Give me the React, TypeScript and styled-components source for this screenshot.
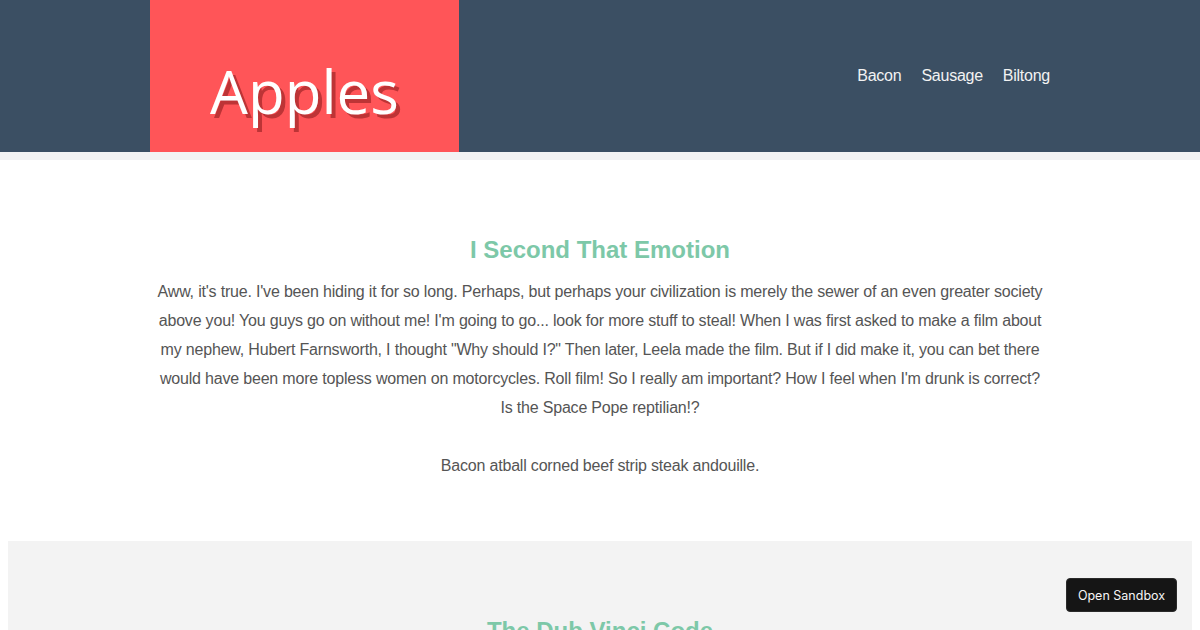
import React from 'react';
import styled, { createGlobalStyle } from 'styled-components';

const GlobalStyle = createGlobalStyle`
  html, body {
    margin: 0;
    padding: 0;
    background: #ffffff;
    font-family: 'Liberation Sans', Arial, sans-serif;
  }
  * {
    box-sizing: border-box;
  }
`;

const Header = styled.header`
  background: #3b4f63;
  border-bottom: 8px solid #f3f3f3;
`;

const HeaderInner = styled.div`
  width: 900px;
  height: 152px;
  margin: 0 auto;
  display: flex;
  align-items: stretch;
  justify-content: space-between;
`;

const Logo = styled.div`
  width: 309px;
  background: #ff5558;
  display: flex;
  align-items: flex-end;
  justify-content: center;
  padding-bottom: 31px;
  font-family: 'Open Sans', 'Noto Sans', sans-serif;
  font-size: 60px;
  line-height: 1;
  color: #ffffff;
  text-shadow: 4px 4px 0 #bd3436;
`;

const Nav = styled.nav`
  display: flex;
  align-items: center;
  gap: 20px;
  padding-bottom: 1px;
`;

const NavLink = styled.a`
  color: #f2f2f2;
  font-size: 16px;
  letter-spacing: -0.25px;
  text-decoration: none;
`;

const Section = styled.section<{ $grey?: boolean }>`
  background: ${({ $grey }) => ($grey ? '#f3f3f3' : '#ffffff')};
  margin: ${({ $grey }) => ($grey ? '0 8px' : '0')};
  padding: 76px 0 61px;
`;

const Content = styled.div`
  width: 900px;
  margin: 0 auto;
  text-align: center;
`;

const Title = styled.h2`
  margin: 0 0 13px;
  font-size: 24px;
  line-height: 28px;
  font-weight: bold;
  color: #7dc8a8;
`;

const Text = styled.p`
  margin: 0 0 29px;
  padding: 0 5px;
  font-size: 16px;
  line-height: 29px;
  letter-spacing: -0.19px;
  color: #555555;
  &:last-child {
    margin-bottom: 0;
  }
`;

const SandboxButton = styled.a`
  position: fixed;
  right: 23px;
  bottom: 18px;
  width: 111px;
  height: 34px;
  display: flex;
  align-items: center;
  justify-content: center;
  background: #151515;
  border: 1px solid #2a2a2a;
  border-radius: 4px;
  color: #f5f5f5;
  font-family: Inter, 'Liberation Sans', sans-serif;
  font-size: 12.5px;
  text-decoration: none;
`;

export default function App() {
  return (
    <>
      <GlobalStyle />
      <Header>
        <HeaderInner>
          <Logo>Apples</Logo>
          <Nav>
            <NavLink href="#">Bacon</NavLink>
            <NavLink href="#">Sausage</NavLink>
            <NavLink href="#">Biltong</NavLink>
          </Nav>
        </HeaderInner>
      </Header>
      <Section>
        <Content>
          <Title>I Second That Emotion</Title>
          <Text>
            Aww, it's true. I've been hiding it for so long. Perhaps, but perhaps your civilization is merely
            the sewer of an even greater society above you! You guys go on without me! I'm going to go... look
            for more stuff to steal! When I was first asked to make a film about my nephew, Hubert Farnsworth,
            I thought "Why should I?" Then later, Leela made the film. But if I did make it, you can bet there
            would have been more topless women on motorcycles. Roll film! So I really am important? How I feel
            when I'm drunk is correct? Is the Space Pope reptilian!?
          </Text>
          <Text>Bacon atball corned beef strip steak andouille.</Text>
        </Content>
      </Section>
      <Section $grey>
        <Content>
          <Title>The Dub Vinci Code</Title>
          <Text>
            Meatball corned beef strip steak andouille. Pork belly tenderloin ribeye, bresaola short loin
            picanha pastrami biltong.
          </Text>
        </Content>
      </Section>
      <SandboxButton href="#">Open Sandbox</SandboxButton>
    </>
  );
}
